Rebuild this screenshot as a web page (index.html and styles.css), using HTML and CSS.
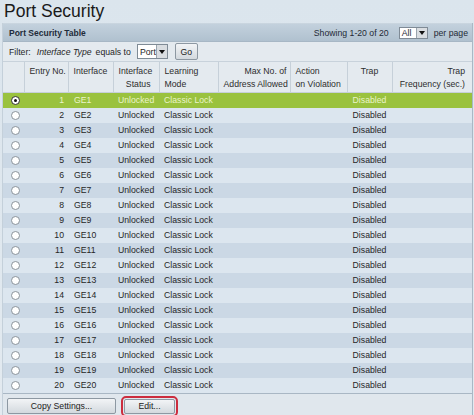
FILE: index.html
```html
<!DOCTYPE html>
<html>
<head>
<meta charset="utf-8">
<link rel="stylesheet" href="styles.css">
</head>
<body>
<h1 class="title">Port Security</h1>
<div class="panel">
  <div class="panel-head">
    <span class="panel-title">Port Security Table</span>
    <span class="paging">Showing 1-20 of 20 <span class="select sel-all"><span class="sel-text">All</span><span class="sel-arrow"></span></span> per page</span>
  </div>
  <div class="filter">
    <span>Filter:</span>
    <i>Interface Type</i>
    <span>equals to</span>
    <span class="select sel-port"><span class="sel-text">Port</span><span class="sel-arrow"></span></span>
    <span class="btn btn-go">Go</span>
  </div>
  <table class="grid">
    <colgroup>
      <col class="w-rad"><col class="w-entry"><col class="w-if"><col class="w-st"><col class="w-lm"><col class="w-max"><col class="w-act"><col class="w-trap"><col>
    </colgroup>
    <thead>
      <tr>
        <th></th>
        <th class="l">Entry No.<br>&nbsp;</th>
        <th class="l">Interface<br>&nbsp;</th>
        <th class="r pr8">Interface<br>Status</th>
        <th class="l">Learning<br>Mode</th>
        <th class="r pr3">Max No. of<br>Address Allowed</th>
        <th class="l">Action<br>on Violation</th>
        <th class="c">Trap<br>&nbsp;</th>
        <th class="r pr7">Trap<br>Frequency (sec.)</th>
      </tr>
    </thead>
    <tbody id="rows"></tbody>
  </table>
  <div class="buttons">
    <span class="btn btn-copy">Copy Settings...</span>
    <span class="hl"><span class="btn btn-edit">Edit...</span></span>
  </div>
</div>
<script>
var tb = document.getElementById('rows');
var h = '';
for (var i = 1; i <= 20; i++) {
  h += '<tr class="' + (i === 1 ? 'sel' : (i % 2 ? 'dark' : 'light')) + '">' +
    '<td class="rad"><span class="radio' + (i === 1 ? ' on' : '') + '"></span></td>' +
    '<td class="num">' + i + '</td><td class="ifc">GE' + i + '</td><td>Unlocked</td><td>Classic Lock</td>' +
    '<td></td><td></td><td class="c">Disabled</td><td></td></tr>';
}
tb.innerHTML = h;
</script>
</body>
</html>
```
FILE: styles.css
```css
html, body {
  margin: 0;
  padding: 0;
}
body {
  width: 474px;
  height: 415px;
  overflow: hidden;
  background: linear-gradient(#dbe5ed, #e3eaf0);
  font-family: "Liberation Sans", Arial, sans-serif;
  font-size: 8.7px;
  color: #262626;
}
.title {
  margin: 0;
  padding: 2px 0 0 4px;
  height: 21px;
  font-size: 17.5px;
  font-weight: normal;
  color: #1a1a1a;
  line-height: 19px;
}
.panel {
  margin-left: 2px;
  width: 469px;
  border-right: 1px solid #a9b8c5;
  border-left: 1px solid #c4d0da;
  background: #e2e9ef;
}
.panel-head {
  height: 17px;
  display: flex;
  align-items: center;
  justify-content: space-between;
  padding: 0 4px 0 6px;
  background: linear-gradient(#c3d1dd, #b0c1cf);
  border-bottom: 1px solid #a7b7c5;
  border-top: 1px solid #c9d5df;
}
.panel-title {
  font-weight: bold;
  font-size: 8.5px;
  color: #1f2c3a;
}
.paging {
  display: flex;
  align-items: center;
  gap: 4px;
  color: #1f2a35;
}
.select {
  display: inline-flex;
  align-items: center;
  height: 12px;
  border: 1px solid #7f8b96;
  background: #fff;
  box-sizing: border-box;
}
.sel-all { width: 29px; margin: 0 2px 0 6px; }
.sel-port { width: 31px; height: 15px; margin-left: 2px; }
.sel-text {
  flex: 1;
  padding-left: 2px;
  line-height: 10px;
}
.sel-arrow {
  width: 10px;
  align-self: stretch;
  background: #d9dde1;
  border-left: 1px solid #9aa4ad;
  position: relative;
}
.sel-arrow::after {
  content: "";
  position: absolute;
  left: 2px;
  top: 50%;
  margin-top: -2px;
  border-left: 3px solid transparent;
  border-right: 3px solid transparent;
  border-top: 4px solid #111;
}
.filter {
  height: 20px;
  display: flex;
  align-items: center;
  gap: 4px;
  padding-left: 6px;
  background: #e4eaef;
  border-bottom: 1px solid #c8d2db;
  box-sizing: border-box;
}
.filter i { margin-left: 2px; }
.btn {
  display: inline-flex;
  align-items: center;
  justify-content: center;
  box-sizing: border-box;
  border: 1px solid #8d98a2;
  border-radius: 2px;
  background: linear-gradient(#f2f4f6, #d3d9de);
  color: #222;
}
.btn-go {
  width: 23px;
  height: 17px;
  margin-left: 3px;
}
.grid {
  width: 100%;
  border-collapse: collapse;
  table-layout: fixed;
}
.w-rad { width: 21px; }
.w-entry { width: 44px; }
.w-if { width: 45px; }
.w-st { width: 46px; }
.w-lm { width: 59px; }
.w-max { width: 72px; }
.w-act { width: 57px; }
.w-trap { width: 45px; }
.grid th {
  height: 29px;
  box-sizing: border-box;
  padding: 3px 4px 1px 5px;
  font-weight: normal;
  line-height: 13px;
  vertical-align: top;
  color: #2d2d2d;
  background: #e4eaef;
  border-left: 1px solid #c6d0d9;
  border-bottom: 1px solid #c6d0d9;
  white-space: nowrap;
  overflow: hidden;
}
.grid th:first-child { border-left: none; }
.l { text-align: left; }
.r { text-align: right; }
.c { text-align: center; }
.grid th.pr8 { padding-right: 8px; }
.grid th.pr3 { padding-right: 3px; }
.grid th.pr7 { padding-right: 7px; }
.grid th.c { padding: 3px 2px 1px; }
.grid td {
  height: 15px;
  padding: 0 4px 0 5px;
  line-height: 15px;
  white-space: nowrap;
  overflow: hidden;
}
.grid td.num { text-align: right; padding-right: 4px; }
.grid td.ifc { padding-left: 6px; }
.grid td.c { padding: 0 2px; }
.grid td.rad { padding: 0 0 0 8px; }
tr.light td { background: #dce6ef; }
tr.dark td { background: #cbd8e5; }
tr.sel td { background: #9ac23e; color: #eaf4c9; }
.radio {
  display: block;
  width: 7px;
  height: 7px;
  border-radius: 50%;
  border: 1px solid #8a939b;
  background: #fff;
  position: relative;
}
.radio.on {
  border-color: #333;
}
.radio.on::after {
  content: "";
  position: absolute;
  left: 2px;
  top: 2px;
  width: 3px;
  height: 3px;
  background: #111;
  border-radius: 50%;
}
.buttons {
  height: 24px;
  display: flex;
  align-items: center;
  gap: 5px;
  padding-left: 4px;
  border-top: 1px solid #a9b7c4;
  background: #e0e7ed;
}
.btn-copy {
  width: 109px;
  height: 16px;
}
.hl {
  display: inline-flex;
  padding: 1px;
  border: 2px solid #cc2d3e;
  border-radius: 5px;
}
.btn-edit {
  width: 51px;
  height: 15px;
}
```
